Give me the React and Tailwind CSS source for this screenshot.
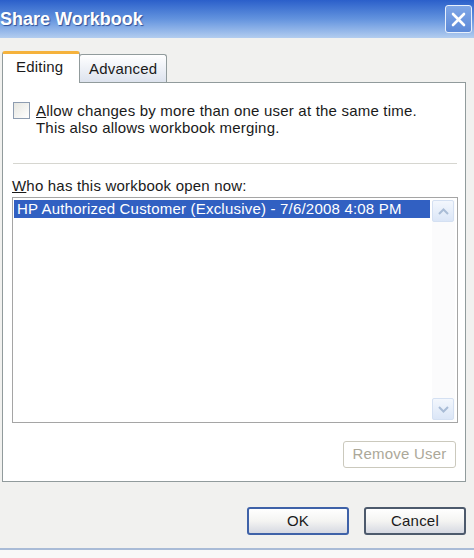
const font = { fontFamily: '"Liberation Sans", Arial, sans-serif' };

const Chevron = ({ up }) => (
  <svg width="11" height="7" viewBox="0 0 11 7">
    <path
      d={up ? 'M1 6 L5.5 1.5 L10 6' : 'M1 1 L5.5 5.5 L10 1'}
      fill="none"
      stroke="#a9bcd6"
      strokeWidth="2"
    />
  </svg>
);

const ScrollButton = ({ up }) => (
  <div className="w-[22px] h-[22px] rounded-[2px] border border-[#d4e0f2] bg-gradient-to-b from-[#f3f7fd] to-[#dbe6f7] flex items-center justify-center">
    <Chevron up={up} />
  </div>
);

export default function App() {
  return (
    <div
      className="w-[474px] h-[558px] bg-[#f1f1ef] overflow-hidden flex flex-col text-[15px] tracking-[0.2px] text-[#1a1a1a]"
      style={font}
    >
      {/* title bar */}
      <div className="h-[38px] shrink-0 flex items-center justify-between bg-gradient-to-b from-[#2b5fca] via-[#6393de] to-[#b3cdef] pr-[2px]">
        <span className="text-white font-bold text-[18px] tracking-[0px] [text-shadow:1px_1px_1px_#2a4f9a]">
          Share Workbook
        </span>
        <div className="w-[27px] h-[28px] rounded-[3px] border border-[#e8f0fb] bg-gradient-to-b from-[#7fa6e6] to-[#5d8ad8] flex items-center justify-center">
          <svg width="17" height="17" viewBox="0 0 17 17">
            <path d="M3 3 L14 14 M14 3 L3 14" stroke="#fff" strokeWidth="2.6" strokeLinecap="round" />
          </svg>
        </div>
      </div>

      {/* tabs */}
      <div className="mt-[13px] pl-[2px] flex items-end">
        <div className="relative z-10 -mb-px w-[78px] h-[32px] bg-white border-x border-[#919b9c] rounded-t-[3px] border-t-[3px] border-t-[#f5b23c] pl-[13px] pt-[3px] leading-[20px]">
          Editing
        </div>
        <div className="w-[88px] h-[28px] -ml-px border border-[#919b9c] border-b-0 rounded-t-[3px] bg-gradient-to-b from-white to-[#dde3ee] pl-[9px] leading-[27px]">
          Advanced
        </div>
      </div>

      {/* tab panel */}
      <div className="ml-[2px] w-[464px] h-[400px] border border-[#919b9c] bg-white px-[7px] pl-[9px] pt-[19px] flex flex-col">
        <div className="flex pl-[1px]">
          <div className="w-[17px] h-[17px] border border-[#8e9db1] bg-gradient-to-br from-[#e6e6e0] to-white shrink-0" />
          <div className="ml-[6px] leading-[17px]">
            <div>
              <span className="underline">A</span>llow changes by more than one user at the same time.
            </div>
            <div>This also allows workbook merging.</div>
          </div>
        </div>

        <div className="mt-[27px] mx-px h-px bg-[#d6d6d0]" />

        <div className="mt-[13px] leading-[17px]">
          <span className="underline">W</span>ho has this workbook open now:
        </div>

        <div className="mt-[3px] h-[226px] border border-[#a5a5a5] flex">
          <div className="flex-1 p-[2px] pl-[1px]">
            <div className="h-[18px] bg-[#3160c2] text-white leading-[18px] pl-[3px]">
              HP Authorized Customer (Exclusive) - 7/6/2008 4:08 PM
            </div>
          </div>
          <div className="w-[23px] my-[2px] mr-[2px] bg-[#fbfbfc] flex flex-col justify-between">
            <ScrollButton up />
            <ScrollButton />
          </div>
        </div>

        <div className="mt-[18px] flex justify-end pr-[2px]">
          <div className="w-[113px] h-[27px] border border-[#cbc9bd] rounded-[3px] bg-white text-[#aca899] flex items-center justify-center">
            Remove User
          </div>
        </div>
      </div>

      {/* buttons */}
      <div className="mt-[25px] flex justify-end gap-[15px] pr-[8px]">
        <div className="w-[102px] h-[28px] rounded-[3px] border-2 border-[#3f62a8] bg-gradient-to-b from-white via-[#f4f4f2] to-[#d6d9e2] flex items-center justify-center">
          OK
        </div>
        <div className="w-[102px] h-[28px] rounded-[3px] border-2 border-[#4d5a6c] bg-gradient-to-b from-white via-[#f4f4f2] to-[#d6d9e2] flex items-center justify-center">
          Cancel
        </div>
      </div>

      <div className="mt-[13px] h-[2px] bg-[#a9bbd6]" />
      <div className="flex-1 bg-[#f8f8f8]" />
    </div>
  );
}
